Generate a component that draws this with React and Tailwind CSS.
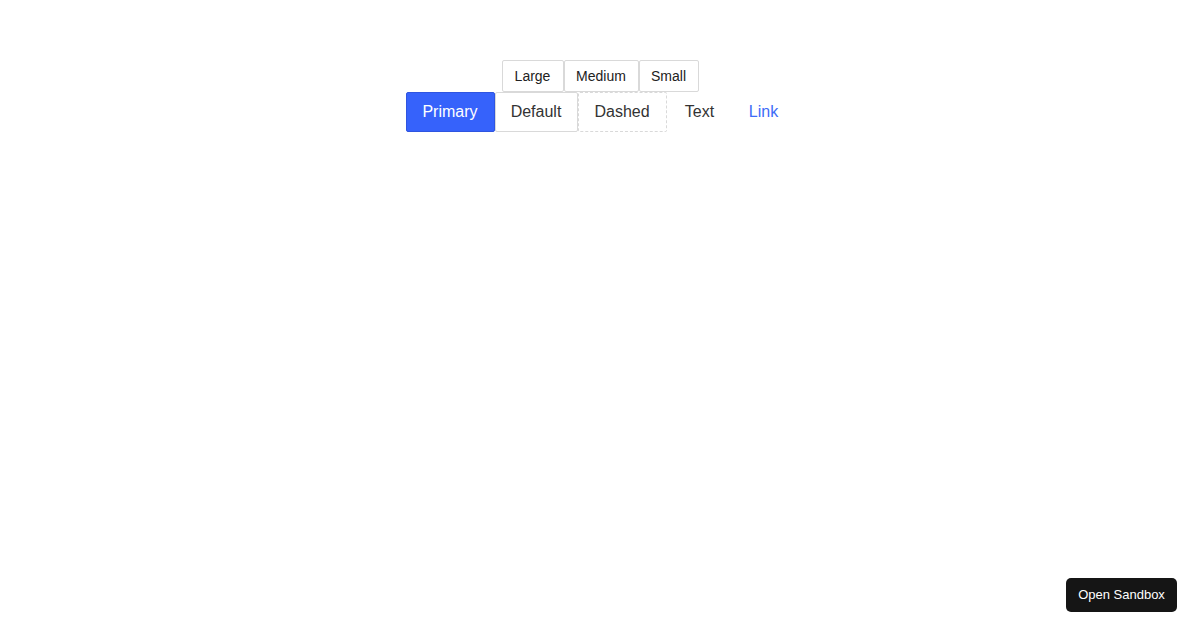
import React from 'react';

const sizes = [
  { label: 'Large', w: 'w-[62px]' },
  { label: 'Medium', w: 'w-[75px]' },
  { label: 'Small', w: 'w-[60px]' },
];

function App() {
  return (
    <div className="relative h-[630px] w-full bg-white font-['Liberation_Sans',Arial,sans-serif] text-[#333]">
      <div className="flex flex-col items-center pt-[60px]">
        <div className="flex">
          {sizes.map((s) => (
            <button
              key={s.label}
              className={`h-8 ${s.w} rounded-[2px] border border-[#d9d9d9] bg-white text-sm text-[#222]`}
            >
              {s.label}
            </button>
          ))}
        </div>

        <div className="flex">
          <button className="h-10 w-[89px] rounded-[2px] border border-[#2f55e0] bg-[#3662fb] text-base text-white">
            Primary
          </button>
          <button className="h-10 w-[83px] rounded-[2px] border border-[#d9d9d9] bg-white text-base">
            Default
          </button>
          <button className="h-10 w-[89px] rounded-[2px] border border-dashed border-[#d9d9d9] bg-white text-base">
            Dashed
          </button>
          <button className="h-10 w-[66px] border border-transparent text-base">
            Text
          </button>
          <button className="h-10 w-[62px] border border-transparent text-base text-[#3d6cf7]">
            Link
          </button>
        </div>
      </div>

      {/* sandbox link, bottom right */}
      <button className="absolute bottom-[18px] right-[23px] h-[34px] w-[111px] rounded-[5px] bg-[#151515] text-[13px] text-white">
        Open Sandbox
      </button>
    </div>
  );
}

export default App;
